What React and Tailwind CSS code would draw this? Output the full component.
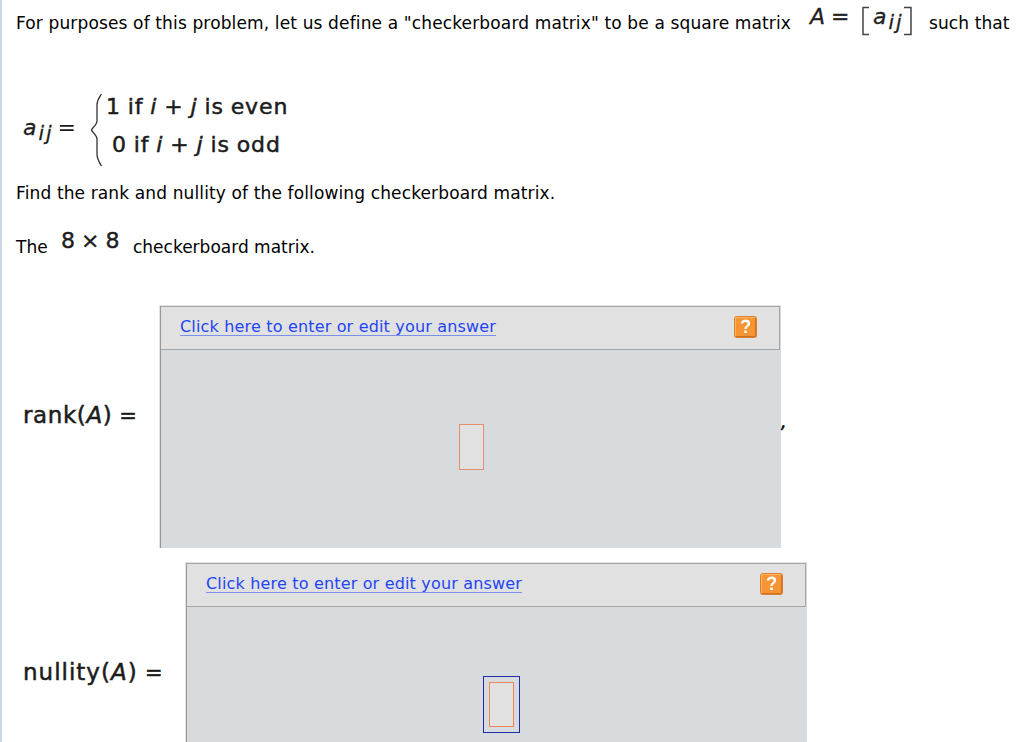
import React from 'react';

const HelpButton = () => (
  <button className="w-[23px] h-[22px] shrink-0" aria-label="Help">
    <svg width="23" height="22" viewBox="0 0 23 22">
      <rect x="0.5" y="0.5" width="22" height="21" rx="2" fill="#f79433" stroke="#dc8030" />
      <path d="M1.5 20V1.5H21" fill="none" stroke="#ffb366" />
      <path d="M2 20.5H21.5V2" fill="none" stroke="#cf7020" />
      <path d="M8 7.5C8 3.8 15 3.8 15 7.5C15 10 11.5 9.8 11.5 13" fill="none" stroke="#fff" strokeWidth="2.4" />
      <rect x="10.2" y="14.6" width="2.6" height="2.4" fill="#fff" />
    </svg>
  </button>
);

// Subscripted a_ij used in the definition
const Entry = () => (
  <span className="italic [-webkit-text-stroke:0.3px_#222]">
    a<sub className="relative top-[5px] bottom-auto ml-[2px] text-[20px] leading-none align-baseline tracking-[2px]">ij</sub>
  </span>
);

const AnswerBox = ({ active = false }) => (
  <div className="w-[622px] h-[243px] shrink-0 bg-[#d7dbde] border-t border-l border-[#e4e4e4]">
    <div className="h-[242px] border-l border-[#979797]">
      <div className="flex justify-between w-[619px] h-[44px] pl-[19px] pr-[22px] pt-[9px] bg-[#e1e1e1] border-y border-r border-[#a5a5a5]">
        <a
          href="#"
          className="h-[20px] text-[16px] leading-[21px] whitespace-nowrap text-[#1f45f5] border-b border-[#7891ed] tracking-[0.17px]"
        >
          Click here to enter or edit your answer
        </a>
        <HelpButton />
      </div>
      {active ? (
        <div className="w-[37px] h-[57px] mt-[69px] ml-[296px] p-[5px] border border-[#202caa]">
          <div className="h-full bg-[#e1e1e1] border border-[#f58358]"></div>
        </div>
      ) : (
        <div className="w-[25px] h-[46px] mt-[74px] ml-[298px] bg-[#e1e1e1] border border-[#e98e6c]"></div>
      )}
    </div>
  </div>
);

const App = () => (
  <div className="h-[742px] overflow-hidden bg-white border-l-2 border-[#cbd5e3] text-[17px] leading-6 text-black font-['DejaVu_Sans',sans-serif]">
    <div className="flex h-[92px] pl-[14px] whitespace-nowrap">
      <p className="w-[794px] pt-[11px] tracking-[0.14px]">
        For purposes of this problem, let us define a "checkerboard matrix" to be a square matrix
      </p>
      <div className="flex w-[119px] pt-[5px] text-[22px] text-[#222]">
        <span className="w-[51px] [word-spacing:-1px] [-webkit-text-stroke:0.3px_#222]"><i>A</i> =</span>
        <svg className="mt-[1px] mr-[4px]" width="8" height="30" viewBox="0 0 8 30">
          <path d="M9 1.5H2V28.5H9" fill="none" stroke="#444" strokeWidth="1.5" />
        </svg>
        <Entry />
        <svg className="mt-[1px]" width="8" height="30" viewBox="0 0 8 30">
          <path d="M-2 1.5H7V28.5H-2" fill="none" stroke="#444" strokeWidth="1.5" />
        </svg>
      </div>
      <p className="pt-[11px] tracking-[0.1px]">such that</p>
    </div>

    <div className="flex h-[88px] pl-[21px] text-[22px] text-[#1c1c1c] whitespace-nowrap">
      <span className="w-[67px] pt-[24px] [word-spacing:-3px]"><Entry /> =</span>
      <svg width="14" height="76" viewBox="0 0 14 76">
        <path d="M11.5 2C9 6 7 8 7 13V29C7 33 2 36 1.5 38C2 40 7 43 7 47V62C7 67 9 70 11.5 74" fill="none" stroke="#333" strokeWidth="1.3" />
      </svg>
      <div className="pt-[3px] tracking-[0.9px] [word-spacing:-1px] [-webkit-text-stroke:0.5px_#1c1c1c]">
        <p className="h-[38px] pl-[2px]">1 if <i>i</i> + <i>j</i> is even</p>
        <p className="pl-[8px]">0 if <i>i</i> + <i>j</i> is odd</p>
      </div>
    </div>

    <p className="h-[49px] pt-px pl-[14px] tracking-[0.13px]">Find the rank and nullity of the following checkerboard matrix.</p>

    <div className="flex h-[76px] pl-[14px] whitespace-nowrap">
      <span className="w-[45px] pt-[6px]">The</span>
      <span className="w-[72px] text-[22px] text-[#1c1c1c] [word-spacing:-1px] [-webkit-text-stroke:0.4px_#1c1c1c]">8 × 8</span>
      <span className="pt-[6px]">checkerboard matrix.</span>
    </div>

    <div className="flex h-[257px] pl-[21px]">
      <span className="w-[136px] pt-[98px] text-[23px] text-[#1c1c1c] whitespace-nowrap tracking-[0.6px] [word-spacing:-1px] [-webkit-text-stroke:0.5px_#1c1c1c]">
        rank(<i>A</i>) <span className="text-[21px]">=</span>
      </span>
      <AnswerBox />
      <span className="pt-[105px] italic [-webkit-text-stroke:0.5px_black]">,</span>
    </div>

    <div className="flex pl-[21px]">
      <span className="w-[162px] pt-[98px] text-[23px] text-[#1c1c1c] whitespace-nowrap tracking-[1px] [word-spacing:-1px] [-webkit-text-stroke:0.5px_#1c1c1c]">
        nullity(<i>A</i>) <span className="text-[21px]">=</span>
      </span>
      <AnswerBox active />
    </div>
  </div>
);

export default App;
